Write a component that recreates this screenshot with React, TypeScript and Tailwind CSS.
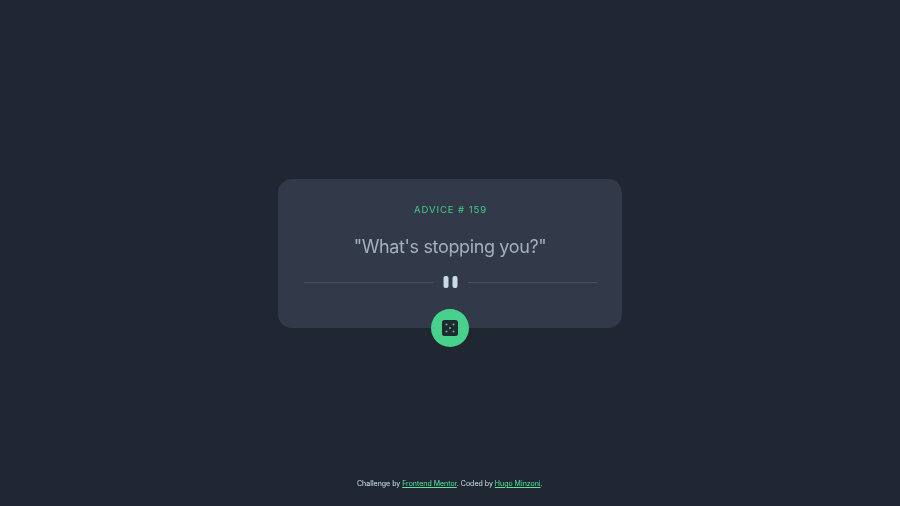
const font = "font-['Inter','Noto_Sans',sans-serif]";

function Divider() {
  return (
    <div className="flex items-center justify-center w-full">
      <div className="h-px flex-1 bg-[#465263]" />
      <svg width="34" height="12" viewBox="0 0 34 12" className="shrink-0">
        <rect x="9.5" y="0" width="5" height="12" rx="2" fill="#c9dbe3" />
        <rect x="18.5" y="0" width="5" height="12" rx="2" fill="#c9dbe3" />
      </svg>
      <div className="h-px flex-1 bg-[#465263]" />
    </div>
  );
}

function DiceButton() {
  return (
    <button className="absolute left-1/2 -bottom-[19px] -translate-x-1/2 w-[38px] h-[38px] rounded-full bg-[#47d18c] flex items-center justify-center">
      <svg width="16" height="16" viewBox="0 0 16 16">
        <rect width="16" height="16" rx="2.5" fill="#202733" />
        <circle cx="4.5" cy="4.5" r="1" fill="#47d18c" />
        <circle cx="11.5" cy="4.5" r="1" fill="#47d18c" />
        <circle cx="8" cy="8" r="1" fill="#47d18c" />
        <circle cx="4.5" cy="11.5" r="1" fill="#47d18c" />
        <circle cx="11.5" cy="11.5" r="1" fill="#47d18c" />
      </svg>
    </button>
  );
}

export default function App() {
  return (
    <div className={`h-screen bg-[#202733] grid grid-rows-[1fr_auto_1fr] justify-items-center ${font}`}>
      <div />
      <main className="relative w-[344px] h-[149px] rounded-[14px] bg-[#323a49] flex flex-col items-center pl-[26px] pr-[25px] pt-[25px] will-change-transform">
        <h1 className="text-[9.5px] leading-[12px] tracking-[0.1em] text-[#47c98a]">ADVICE # 159</h1>
        <p className="mt-[17px] -ml-px text-[18px] leading-[28px] tracking-[-0.02em] text-[#a5b0bd]">"What's stopping you?"</p>
        <div className="mt-[15px] w-full">
          <Divider />
        </div>
        <DiceButton />
      </main>
      <footer className="self-end pb-[17px] text-[7px] leading-[10px] text-[#cee3e9] will-change-transform">
        Challenge by{' '}
        <a className="text-[#53e79f] underline">Frontend Mentor</a>. Coded by{' '}
        <a className="text-[#53e79f] underline">Hugo Minzoni</a>.
      </footer>
    </div>
  );
}
